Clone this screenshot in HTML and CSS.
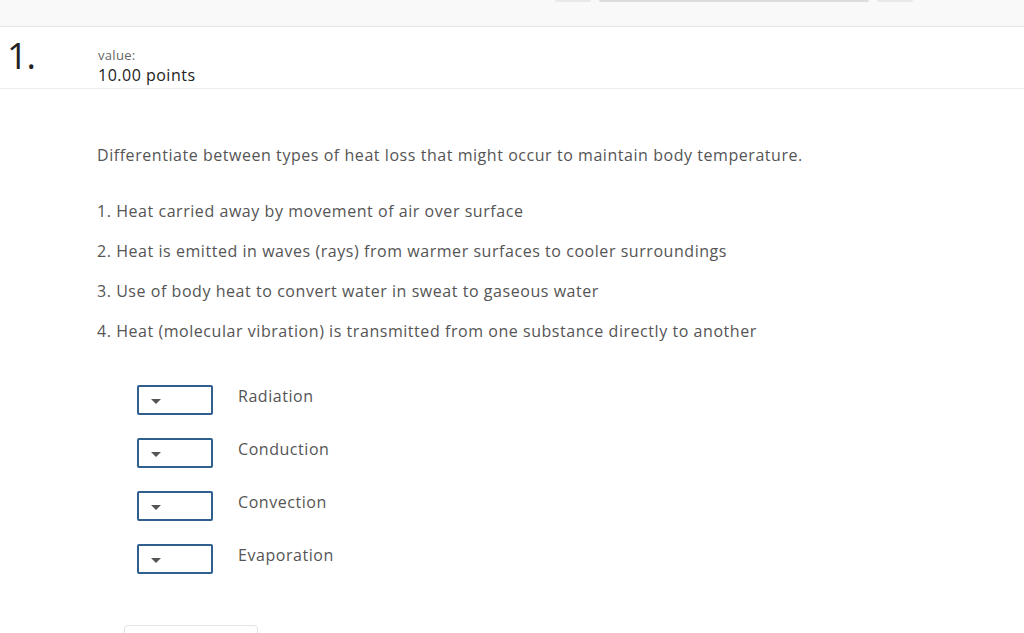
FILE: index.html
```html
<!DOCTYPE html>
<html lang="en">
<head>
<meta charset="UTF-8">
<meta name="viewport" content="width=device-width, initial-scale=1.0">
<title>Question 1</title>
<link rel="stylesheet" href="styles.css">
</head>
<body>
<div class="topbar">
  <div class="tb-btn tb-small"></div>
  <div class="tb-btn tb-wide"></div>
  <div class="tb-btn tb-small"></div>
</div>

<div class="qhead">
  <div class="qnum">1.</div>
  <div class="qvalue">
    <div class="label">value:</div>
    <div class="points">10.00 points</div>
  </div>
</div>

<div class="qbody">
  <p class="prompt">Differentiate between types of heat loss that might occur to maintain body temperature.</p>

  <ol class="clues">
    <li>1. Heat carried away by movement of air over surface</li>
    <li>2. Heat is emitted in waves (rays) from warmer surfaces to cooler surroundings</li>
    <li>3. Use of body heat to convert water in sweat to gaseous water</li>
    <li>4. Heat (molecular vibration) is transmitted from one substance directly to another</li>
  </ol>

  <div class="matches">
    <div class="match">
      <div class="select"><span class="arrow"></span></div>
      <span class="term">Radiation</span>
    </div>
    <div class="match">
      <div class="select"><span class="arrow"></span></div>
      <span class="term">Conduction</span>
    </div>
    <div class="match">
      <div class="select"><span class="arrow"></span></div>
      <span class="term">Convection</span>
    </div>
    <div class="match">
      <div class="select"><span class="arrow"></span></div>
      <span class="term">Evaporation</span>
    </div>
  </div>

  <div class="check-btn"></div>
</div>
</body>
</html>
```

FILE: styles.css
```css
body, html {
  margin: 0;
  height: 100%;
  overflow: hidden;
}

body {
  font-family: "Open Sans", Lato, sans-serif;
  color: #333;
  background: #fff;
}

.topbar {
  height: 26px;
  background: #f9f9f9;
  border-bottom: 1px solid #e6e6e6;
  display: flex;
  padding-left: 555px;
  gap: 8px;
}

.tb-btn {
  height: 2px;
  border-radius: 0 0 3px 3px;
  background: #e9e9e9;
}

.tb-small {
  width: 36px;
}

.tb-wide {
  width: 270px;
  background: #dcdcdc;
}

.qhead {
  display: flex;
  height: 61px;
  border-bottom: 1px solid #ececec;
  padding-left: 7px;
}

.qnum {
  font-size: 36px;
  line-height: 1;
  width: 91px;
  padding-top: 11px;
  color: #222;
  letter-spacing: -1px;
}

.qvalue {
  padding-top: 20px;
}

.qvalue .label {
  font-size: 13px;
  color: #666;
  line-height: 17px;
  letter-spacing: 0.3px;
}

.qvalue .points {
  font-size: 16px;
  color: #222;
  line-height: 22px;
  letter-spacing: 0.5px;
}

.qbody {
  padding-left: 97px;
}

.prompt {
  margin: 55px 0 0;
  font-size: 16px;
  line-height: 22px;
  letter-spacing: 0.55px;
  color: #555;
}

.clues {
  list-style: none;
  margin: 34px 0 0;
  padding: 0;
  display: flex;
  flex-direction: column;
  gap: 18px;
}

.clues li {
  font-size: 16px;
  line-height: 22px;
  letter-spacing: 0.55px;
  color: #555;
}

.matches {
  margin: 43px 0 0 40px;
  display: flex;
  flex-direction: column;
  gap: 23px;
}

.match {
  display: flex;
  align-items: flex-start;
}

.select {
  height: 26px;
  border: 2px solid #2f5f8e;
  border-radius: 2px;
  display: flex;
  align-items: center;
  padding-left: 12px;
  box-sizing: content-box;
  width: 60px;
}

.arrow {
  width: 0;
  height: 0;
  border-left: 5px solid transparent;
  border-right: 5px solid transparent;
  border-top: 5px solid #555;
  margin-top: 2px;
}

.term {
  margin-left: 25px;
  font-size: 16px;
  line-height: 22px;
  letter-spacing: 0.55px;
  color: #555;
}

.check-btn {
  margin: 51px 0 0 27px;
  width: 132px;
  height: 30px;
  border: 1px solid #e3e3e3;
  border-radius: 4px;
}
```
